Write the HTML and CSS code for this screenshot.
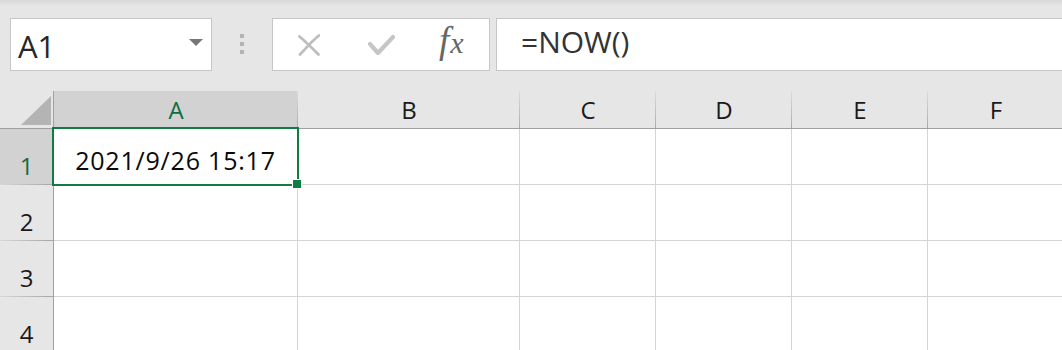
FILE: index.html
```html
<!DOCTYPE html>
<html lang="ja">
<head>
    <meta charset="UTF-8" />
    <title>Book1 - Excel</title>
    <link rel="stylesheet" href="styles.css">
</head>
<body>
    <div class="toolbar">
        <div class="namebox">
            <span class="name">A1</span>
            <span class="caret"></span>
        </div>
        <div class="grip"><i></i><i></i><i></i></div>
        <div class="fx-buttons">
            <svg class="icon-cancel" width="22" height="22" viewBox="0 0 22 22">
                <path d="M1.5 2.5 C8 8 14 14 20.5 20.5" />
                <path d="M21 1.5 C14 7 8 14 2 20.5" />
            </svg>
            <svg class="icon-enter" width="27" height="22" viewBox="0 0 27 22">
                <path d="M2 10 L10 19 L25 3" />
            </svg>
            <span class="fx"><span class="f">f</span><span class="x">x</span></span>
        </div>
        <div class="formula">=NOW()</div>
    </div>

    <div class="sheet">
        <div class="corner"><span class="tri"></span></div>
        <div class="col-head selected">A</div>
        <div class="col-head">B</div>
        <div class="col-head">C</div>
        <div class="col-head">D</div>
        <div class="col-head">E</div>
        <div class="col-head">F</div>

        <div class="row-head selected">1</div>
        <div class="cell active">
            2021/9/26 15:17
            <div class="selection"><span class="handle"></span></div>
        </div>
        <div class="cell"></div>
        <div class="cell"></div>
        <div class="cell"></div>
        <div class="cell"></div>
        <div class="cell"></div>

        <div class="row-head">2</div>
        <div class="cell"></div>
        <div class="cell"></div>
        <div class="cell"></div>
        <div class="cell"></div>
        <div class="cell"></div>
        <div class="cell"></div>

        <div class="row-head">3</div>
        <div class="cell"></div>
        <div class="cell"></div>
        <div class="cell"></div>
        <div class="cell"></div>
        <div class="cell"></div>
        <div class="cell"></div>

        <div class="row-head">4</div>
        <div class="cell"></div>
        <div class="cell"></div>
        <div class="cell"></div>
        <div class="cell"></div>
        <div class="cell"></div>
        <div class="cell"></div>
    </div>
</body>
</html>
```

FILE: styles.css
```css
body {
    margin: 0;
    background-color: #e6e6e6;
    font-family: "Open Sans", "Noto Sans", sans-serif;
    color: #222;
    overflow: hidden;
}

/* formula bar */
.toolbar {
    height: 91px;
    box-sizing: border-box;
    display: flex;
    align-items: flex-start;
    padding: 18px 0 0 10px;
    background: linear-gradient(#d8d8d8, #e6e6e6 6px);
}
.namebox {
    width: 202px;
    height: 53px;
    box-sizing: border-box;
    border: 1px solid #c6c6c6;
    background: white;
    display: flex;
    padding-left: 7px;
}
.name {
    font-size: 31px;
    line-height: 54px;
    color: #262626;
}
.caret {
    margin: 20px 8px 0 auto;
    width: 0;
    height: 0;
    border-left: 7.5px solid transparent;
    border-right: 7.5px solid transparent;
    border-top: 7px solid #777;
}
.grip {
    width: 4px;
    margin: 16px 28px 0 28px;
    display: flex;
    flex-direction: column;
    gap: 4px;
}
.grip i {
    display: block;
    width: 4px;
    height: 4px;
    background: #b3b3b3;
}
.fx-buttons {
    width: 218px;
    height: 53px;
    box-sizing: border-box;
    border: 1px solid #c6c6c6;
    background: white;
    display: flex;
    align-items: center;
    padding-left: 25px;
    gap: 48px;
}
.fx-buttons svg {
    fill: none;
    stroke-linecap: round;
}
.icon-cancel {
    stroke: #bdbdbd;
    stroke-width: 2.8;
}
.icon-enter {
    stroke: #c6c6c6;
    stroke-width: 4.2;
    stroke-linejoin: round;
}
.fx {
    font-family: "Liberation Serif", serif;
    font-style: italic;
    color: #666;
    line-height: 30px;
    white-space: nowrap;
    margin-left: -4px;
}
.fx .f {
    font-size: 37px;
}
.fx .x {
    font-size: 30px;
    margin-left: 1px;
}
.formula {
    flex: 1;
    height: 53px;
    box-sizing: border-box;
    margin: 0 -20px 0 6px;
    border: 1px solid #c6c6c6;
    background: white;
    padding-left: 24px;
    font-size: 30px;
    line-height: 45px;
    color: #333;
}

/* grid */
.sheet {
    display: grid;
    grid-template-columns: 54px 244px 222px 136px 136px 136px 136px;
    grid-template-rows: 38px repeat(4, 56px);
    width: 1064px;
}
.sheet > div {
    box-sizing: border-box;
}
.corner {
    border-right: 1px solid #a0a0a0;
    border-bottom: 1px solid #a0a0a0;
    display: flex;
    justify-content: flex-end;
    align-items: flex-end;
    padding: 0 2px 3px 0;
}
.tri {
    width: 30px;
    height: 29px;
    background: #b4b4b4;
    clip-path: polygon(100% 0, 100% 100%, 0 100%);
}
.col-head,
.row-head {
    display: flex;
    justify-content: center;
    align-items: flex-end;
    padding-bottom: 6px;
    font-size: 24px;
    line-height: 24px;
    color: #1a1a1a;
}
.col-head {
    border-bottom: 1px solid #a0a0a0;
    background: linear-gradient(#dcdcdc, #ababab) right / 1px 100% no-repeat, #e6e6e6;
}
.row-head {
    border-right: 1px solid #a0a0a0;
    background: linear-gradient(to right, #d6d6d6, #a6a6a6) bottom / 100% 1px no-repeat, #e6e6e6;
    padding-bottom: 7px;
}
.col-head.selected,
.row-head.selected {
    background-color: #d2d2d2;
    color: #0f6d43;
}
.cell {
    background: white;
    border-right: 1px solid #d4d4d4;
    border-bottom: 1px solid #d4d4d4;
}
.cell.active {
    position: relative;
    display: flex;
    justify-content: center;
    align-items: flex-end;
    padding-bottom: 11px;
    font-size: 25px;
    line-height: 25px;
    letter-spacing: 0.8px;
    color: #0a0a0a;
}
.selection {
    position: absolute;
    left: -2px;
    top: -2px;
    width: 247px;
    height: 59px;
    box-sizing: border-box;
    border: 2px solid #107c41;
    z-index: 1;
}
.handle {
    position: absolute;
    left: 238px;
    top: 50px;
    width: 8px;
    height: 8px;
    background: #107c41;
    border: 1px solid white;
}
```
